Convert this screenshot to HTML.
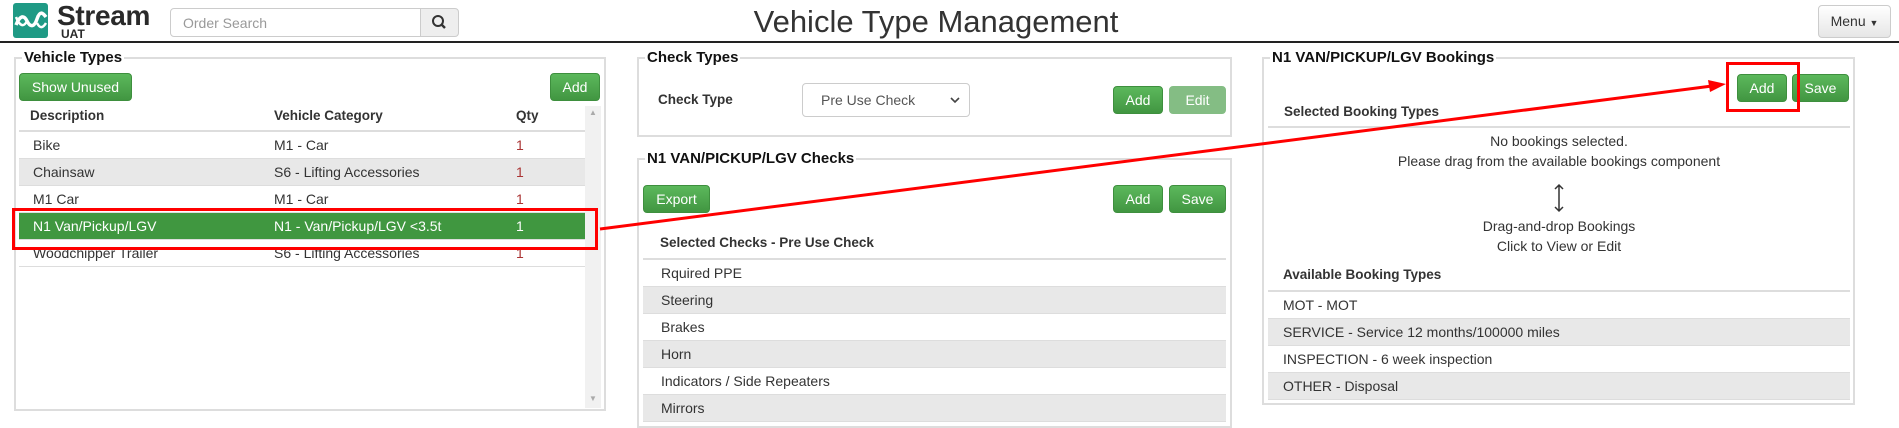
<!DOCTYPE html>
<html><head><meta charset="utf-8"><style>
*{box-sizing:border-box;margin:0;padding:0}
body{width:1899px;height:418px;overflow:hidden;background:#fff;font-family:"Liberation Sans",Arial,sans-serif;font-size:14px;color:#333;position:relative}
.a{position:absolute}
.btn{position:absolute;background:linear-gradient(#5cb85c,#419641);border:1px solid #3e8f3e;border-radius:4px;color:#fff;font-size:14px;text-align:center;line-height:26px}
.fs{position:absolute;border:2px solid #ddd}
.lg{position:absolute;top:-11px;left:6px;background:#fff;padding:0 2px;font-weight:bold;font-size:15px;color:#111;line-height:20px}
.row{position:absolute;height:27px;line-height:26px;border-bottom:1px solid #ddd}
.g{background:#e8e8e8}
.hd{position:absolute;font-weight:bold;font-size:13.5px;color:#333}
</style></head><body>
<div class="a" style="left:13px;top:3px;width:35px;height:35px;background:#1f9a85;border-radius:3px">
<svg width="35" height="35" viewBox="0 0 35 35"><path d="M3 22 C7 12,11 12,14 18 S21 25,24 16 S30 10,33 14" stroke="#fff" stroke-width="3.5" fill="none"/><path d="M3 14 C7 24,11 24,14 18" stroke="#fff" stroke-width="2.5" fill="none"/><path d="M24 20 C27 26,30 25,33 20" stroke="#fff" stroke-width="2.5" fill="none"/></svg></div>
<div class="a" style="left:57px;top:0px;font-size:28px;font-weight:bold;color:#2a2a2a;letter-spacing:-0.3px">Stream</div>
<div class="a" style="left:61px;top:27px;font-size:12px;font-weight:bold;color:#2a2a2a">UAT</div>
<div class="a" style="left:170px;top:8px;width:251px;height:29px;border:1px solid #ccc;border-radius:4px 0 0 4px;padding:6px 12px;color:#999;font-size:14px">Order Search</div>
<div class="a" style="left:420px;top:8px;width:39px;height:29px;border:1px solid #ccc;background:#eee;border-radius:0 4px 4px 0">
<svg width="37" height="27"><circle cx="17" cy="12" r="5" stroke="#333" stroke-width="2" fill="none"/><path d="M20.5 15.5 L24 19" stroke="#333" stroke-width="2.4"/></svg></div>
<div class="a" style="left:0;width:1880px;top:4px;text-align:center;font-size:31px;color:#333"><span style="position:relative;left:-4px">Vehicle Type Management</span></div>
<div class="a" style="left:1818px;top:5px;width:73px;height:33px;border:1px solid #ccc;border-radius:4px;background:linear-gradient(#fff,#e6e6e6);line-height:31px;text-align:center;font-size:14px">Menu <span style="font-size:9px">▼</span></div>
<div class="a" style="left:0;top:41px;width:1899px;height:2px;background:#222"></div>

<div class="fs" style="left:14px;top:57px;width:592px;height:354px">
<div class="lg">Vehicle Types</div></div>
<div class="btn" style="left:19px;top:73px;width:113px;height:28px">Show Unused</div>
<div class="btn" style="left:550px;top:73px;width:50px;height:28px">Add</div>
<div class="a" style="left:585px;top:106px;width:16px;height:302px;background:#f1f1f1"></div>
<div class="a" style="left:589px;top:108px;color:#aaa;font-size:8px">▲</div>
<div class="a" style="left:589px;top:394px;color:#aaa;font-size:8px">▼</div>
<div class="hd" style="left:30px;top:108px">Description</div>
<div class="hd" style="left:274px;top:108px">Vehicle Category</div>
<div class="hd" style="left:516px;top:108px">Qty</div>
<div class="a" style="left:19px;top:130px;width:566px;height:2px;background:#ddd"></div>
<div class="row" style="left:19px;top:132px;width:566px"><span class="a" style="left:14px">Bike</span><span class="a" style="left:255px">M1 - Car</span><span class="a" style="left:497px;color:#a33">1</span></div>
<div class="row g" style="left:19px;top:159px;width:566px"><span class="a" style="left:14px">Chainsaw</span><span class="a" style="left:255px">S6 - Lifting Accessories</span><span class="a" style="left:497px;color:#a33">1</span></div>
<div class="row" style="left:19px;top:186px;width:566px"><span class="a" style="left:14px">M1 Car</span><span class="a" style="left:255px">M1 - Car</span><span class="a" style="left:497px;color:#a33">1</span></div>
<div class="row" style="left:19px;top:213px;width:566px;background:#409740;color:#fff"><span class="a" style="left:14px">N1 Van/Pickup/LGV</span><span class="a" style="left:255px">N1 - Van/Pickup/LGV &lt;3.5t</span><span class="a" style="left:497px">1</span></div>
<div class="row" style="left:19px;top:240px;width:566px"><span class="a" style="left:14px">Woodchipper Trailer</span><span class="a" style="left:255px">S6 - Lifting Accessories</span><span class="a" style="left:497px;color:#a33">1</span></div>
<div class="a" style="left:12px;top:208px;width:586px;height:42px;border:3px solid #f00"></div>

<div class="fs" style="left:637px;top:57px;width:595px;height:80px"><div class="lg">Check Types</div></div>
<div class="hd" style="left:658px;top:92px">Check Type</div>
<div class="a" style="left:802px;top:83px;width:168px;height:34px;border:1px solid #ccc;border-radius:4px;padding:8px 18px;color:#555">Pre Use Check
<svg class="a" style="right:9px;top:13px" width="10" height="7"><path d="M1 1 L5 5 L9 1" stroke="#444" stroke-width="1.6" fill="none"/></svg></div>
<div class="btn" style="left:1113px;top:86px;width:50px;height:28px">Add</div>
<div class="btn" style="left:1169px;top:86px;width:57px;height:28px;background:#84bd84;border-color:#84bd84">Edit</div>

<div class="fs" style="left:637px;top:158px;width:595px;height:270px"><div class="lg">N1 VAN/PICKUP/LGV Checks</div></div>
<div class="btn" style="left:643px;top:185px;width:67px;height:28px">Export</div>
<div class="btn" style="left:1113px;top:185px;width:50px;height:28px">Add</div>
<div class="btn" style="left:1169px;top:185px;width:57px;height:28px">Save</div>
<div class="hd" style="left:660px;top:235px">Selected Checks - Pre Use Check</div>
<div class="a" style="left:643px;top:258px;width:583px;height:2px;background:#ddd"></div>
<div class="row" style="left:643px;top:260px;width:583px"><span class="a" style="left:18px">Rquired PPE</span></div>
<div class="row g" style="left:643px;top:287px;width:583px"><span class="a" style="left:18px">Steering</span></div>
<div class="row" style="left:643px;top:314px;width:583px"><span class="a" style="left:18px">Brakes</span></div>
<div class="row g" style="left:643px;top:341px;width:583px"><span class="a" style="left:18px">Horn</span></div>
<div class="row" style="left:643px;top:368px;width:583px"><span class="a" style="left:18px">Indicators / Side Repeaters</span></div>
<div class="row g" style="left:643px;top:395px;width:583px"><span class="a" style="left:18px">Mirrors</span></div>

<div class="fs" style="left:1262px;top:57px;width:593px;height:348px"><div class="lg">N1 VAN/PICKUP/LGV Bookings</div></div>
<div class="btn" style="left:1737px;top:74px;width:50px;height:28px">Add</div>
<div class="btn" style="left:1792px;top:74px;width:57px;height:28px">Save</div>
<div class="a" style="left:1726px;top:62px;width:74px;height:50px;border:3px solid #f00"></div>
<div class="hd" style="left:1284px;top:104px">Selected Booking Types</div>
<div class="a" style="left:1268px;top:126px;width:582px;height:2px;background:#ddd"></div>
<div class="a" style="left:1268px;width:582px;top:131px;text-align:center;line-height:20px">No bookings selected.<br>Please drag from the available bookings component</div>
<svg class="a" style="left:1553px;top:183px" width="12" height="30"><path d="M6 2 V28 M2 6 L6 2 L10 6 M2 24 L6 28 L10 24" stroke="#333" stroke-width="1.5" fill="none"/></svg>
<div class="a" style="left:1268px;width:582px;top:216px;text-align:center;line-height:20px">Drag-and-drop Bookings<br>Click to View or Edit</div>
<div class="hd" style="left:1283px;top:267px">Available Booking Types</div>
<div class="a" style="left:1268px;top:290px;width:582px;height:2px;background:#ddd"></div>
<div class="row" style="left:1268px;top:292px;width:582px"><span class="a" style="left:15px">MOT - MOT</span></div>
<div class="row g" style="left:1268px;top:319px;width:582px"><span class="a" style="left:15px">SERVICE - Service 12 months/100000 miles</span></div>
<div class="row" style="left:1268px;top:346px;width:582px"><span class="a" style="left:15px">INSPECTION - 6 week inspection</span></div>
<div class="row g" style="left:1268px;top:373px;width:582px"><span class="a" style="left:15px">OTHER - Disposal</span></div>

<svg class="a" style="left:0;top:0" width="1899" height="418"><line x1="600" y1="229" x2="1712" y2="86" stroke="#f00" stroke-width="3"/><path d="M1726 84 L1708 80 L1710 92 Z" fill="#f00"/></svg>
</body></html>
